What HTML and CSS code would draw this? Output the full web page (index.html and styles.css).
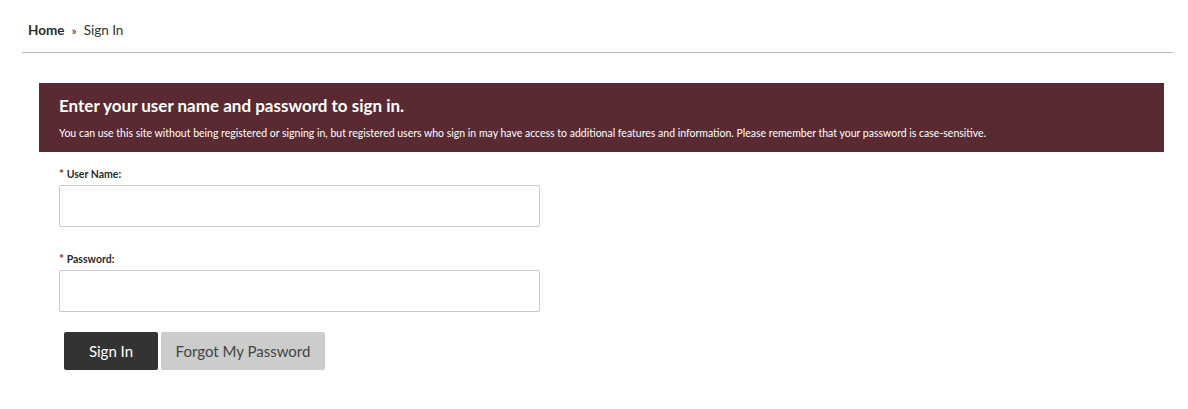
FILE: index.html
```html
<!DOCTYPE html>
<html lang="en">
<head>
<meta charset="utf-8">
<title>Sign In</title>
<link rel="stylesheet" href="styles.css">
</head>
<body>
<div class="page">
  <nav class="breadcrumb">
    <a class="crumb-home" href="#">Home</a>
    <span class="crumb-sep">»</span>
    <span class="crumb-current">Sign In</span>
  </nav>
  <main class="content">
    <section class="banner">
      <h1 class="banner-title">Enter your user name and password to sign in.</h1>
      <p class="banner-text">You can use this site without being registered or signing in, but registered users who sign in may have access to additional features and information. Please remember that your password is case-sensitive.</p>
    </section>
    <form class="signin-form">
      <div class="field">
        <label class="field-label"><span class="req">*</span> User Name:</label>
        <input class="field-input" type="text">
      </div>
      <div class="field field-last">
        <label class="field-label"><span class="req">*</span> Password:</label>
        <input class="field-input" type="password">
      </div>
      <div class="actions">
        <button type="button" class="btn btn-primary">Sign In</button>
        <button type="button" class="btn btn-secondary">Forgot My Password</button>
      </div>
    </form>
  </main>
</div>
</body>
</html>
```
FILE: styles.css
```css
* { box-sizing: border-box; }
html, body { margin: 0; padding: 0; background: #fff; }
body {
  font-family: "Lato", "Open Sans", "Liberation Sans", sans-serif;
  color: #333;
}
.page {
  padding: 0 15px 0 22px;
}
.breadcrumb {
  display: flex;
  align-items: center;
  gap: 7px;
  height: 53px;
  padding: 8px 0 0 6px;
  font-size: 13.5px;
  border-bottom: 1px solid #b5b5b5;
}
.crumb-home {
  color: #2b2b2b;
  font-weight: 700;
  text-decoration: none;
}
.crumb-sep { font-size: 12px; color: #333; }
.crumb-current { color: #333; }
.content {
  padding: 30px 9px 0 17px;
}
.banner {
  background: #5a2a33;
  color: #fff;
  padding: 12px 20px 12px;
  height: 69px;
}
.banner-title {
  margin: 0;
  font-size: 17px;
  font-weight: 700;
  line-height: 22px;
}
.banner-text {
  margin: 9px 0 0;
  font-size: 10.5px;
  line-height: 14px;
}
.signin-form {
  padding: 15px 20px 0;
}
.field { margin-bottom: 25px; }
.field.field-last { margin-bottom: 20px; }
.field-label {
  display: block;
  font-size: 10.5px;
  font-weight: 700;
  color: #2b2b2b;
  margin-bottom: 4px;
  line-height: 14px;
}
.req { color: #a4261c; font-size: 12px; }
.field-input {
  display: block;
  width: 481px;
  height: 42px;
  border: 1px solid #c8c8c8;
  border-radius: 2px;
  background: #fff;
}
.actions {
  display: flex;
  gap: 3px;
  padding-left: 5px;
}
.btn {
  font-family: inherit;
  font-size: 15px;
  height: 38px;
  border: none;
  border-radius: 2px;
  padding: 0;
  white-space: nowrap;
}
.btn-primary {
  background: #333;
  color: #fff;
  width: 94px;
}
.btn-secondary {
  background: #ccc;
  color: #444;
  width: 164px;
}
```
